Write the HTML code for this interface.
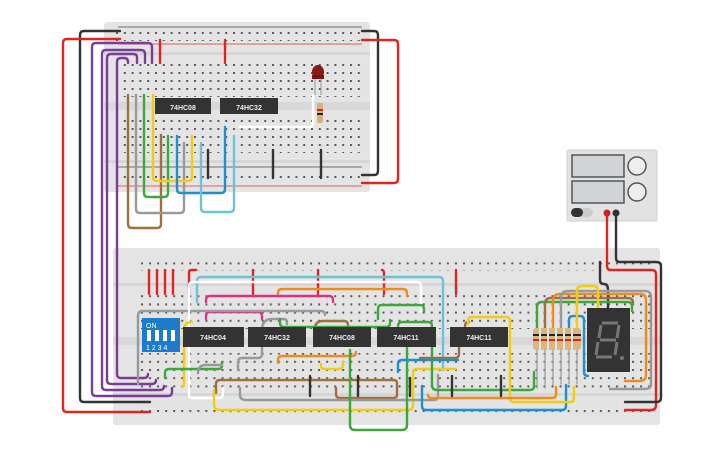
<!DOCTYPE html>
<html><head><meta charset="utf-8"><style>
html,body{margin:0;padding:0;background:#fff;width:725px;height:453px;overflow:hidden}
svg{display:block}
text{font-family:"Liberation Sans",sans-serif}
</style></head><body>
<svg width="725" height="453" viewBox="0 0 725 453" xmlns="http://www.w3.org/2000/svg">
<defs>
<pattern id="h1" x="116" y="0" width="7.8" height="8" patternUnits="userSpaceOnUse"><rect x="0" y="0" width="2" height="2" fill="#5a5a5a"/></pattern>
<pattern id="h2" x="141" y="0" width="8.05" height="8.2" patternUnits="userSpaceOnUse"><rect x="0" y="0" width="2" height="2" fill="#5a5a5a"/></pattern>
</defs>
<!-- top breadboard -->
<rect x="104" y="22" width="266" height="170" rx="3" fill="#e4e4e4"/>
<rect x="104" y="52" width="266" height="3" fill="#d6d6d6"/>
<rect x="104" y="102" width="266" height="8" fill="#d8d8d8"/>
<rect x="104" y="160" width="266" height="3" fill="#d6d6d6"/>
<line x1="118" y1="27" x2="362" y2="27" stroke="#444" stroke-width="0.8"/>
<line x1="118" y1="44" x2="362" y2="44" stroke="#d33" stroke-width="0.8"/>
<line x1="118" y1="167" x2="362" y2="167" stroke="#444" stroke-width="0.8"/>
<line x1="118" y1="186" x2="362" y2="186" stroke="#d33" stroke-width="0.8"/>
<g fill="url(#h1)">
<rect x="116" y="30" width="246" height="11" transform="translate(0,0)"/>
<rect x="116" y="62" width="246" height="35"/>
<rect x="116" y="118" width="246" height="35"/>
<rect x="116" y="171" width="246" height="11"/>
</g>
<!-- bottom breadboard -->
<rect x="113" y="248" width="547" height="177" rx="3" fill="#e4e4e4"/>
<rect x="113" y="283" width="547" height="3" fill="#d6d6d6"/>
<rect x="113" y="337" width="547" height="8" fill="#d8d8d8"/>
<rect x="113" y="393" width="547" height="3" fill="#d6d6d6"/>
<g fill="url(#h2)">
<rect x="141" y="260" width="512" height="11"/>
<rect x="141" y="293" width="512" height="36"/>
<rect x="141" y="353" width="512" height="36"/>
<rect x="141" y="404" width="512" height="11"/>
</g>
<!-- power supply -->
<rect x="567" y="150" width="90" height="71" rx="2" fill="#e2e2e2" stroke="#cfcfcf"/>
<rect x="572" y="155" width="52" height="22" fill="#d0d4d6" stroke="#555" stroke-width="1.5"/>
<rect x="572" y="181" width="52" height="22" fill="#d0d4d6" stroke="#555" stroke-width="1.5"/>
<circle cx="637" cy="166" r="9" fill="#eee" stroke="#555" stroke-width="1.5"/>
<circle cx="637" cy="192" r="9" fill="#eee" stroke="#555" stroke-width="1.5"/>
<rect x="571" y="208" width="22" height="9" rx="4.5" fill="#ccc"/><rect x="571" y="208" width="12" height="9" rx="4.5" fill="#333"/>
<circle cx="607" cy="213" r="3.5" fill="#c22"/><circle cx="616" cy="213" r="3.5" fill="#333"/>
<g fill="none" stroke-linecap="round" stroke-linejoin="round" stroke-width="2.4">
<!-- long left wires -->
<path d="M120,31 H84 Q80,31 80,35 V398 Q80,402 84,402 H150" stroke="#333"/>
<path d="M120,39 H67 Q63,39 63,43 V408 Q63,412 67,412 H150" stroke="#e02424"/>
<path d="M152,63 V47 Q152,43 148,43 H96 Q92,43 92,47 V392 Q92,396 96,396 H168 Q172,396 172,392 V388" stroke="#7a3c99"/>
<path d="M145,63 V54 Q145,50 141,50 H106 Q102,50 102,54 V386 Q102,390 106,390 H160 Q164,390 164,386" stroke="#7a3c99"/>
<path d="M137,63 V57 Q137,54 133,54 H111 Q107,54 107,58 V380 Q107,384 111,384 H152 Q156,384 156,380" stroke="#7a3c99"/>
<path d="M128,63 V62 Q128,58 124,58 H121 Q117,58 117,62 V374 Q117,378 121,378 H144 Q148,378 148,374" stroke="#7a3c99"/>
<!-- top board wires -->
<path d="M362,31 H374 Q378,31 378,35 V171 Q378,175 374,175 H362" stroke="#333"/>
<path d="M362,40 H394 Q398,40 398,44 V179 Q398,183 394,183 H362" stroke="#e02424"/>
<path d="M160,40 V63 M225,40 V63" stroke="#e02424"/>
<path d="M208,150 V178 M273,150 V178 M321,150 V178" stroke="#333"/>
<path d="M128,95 V224 Q128,228 132,228 H157 Q161,228 161,224 V135" stroke="#a0703c"/>
<path d="M136,95 V209 Q136,213 140,213 H180 Q184,213 184,209 V143" stroke="#999"/>
<path d="M144,95 V193 Q144,197 148,197 H164 Q168,197 168,193 V136" stroke="#3aa83a"/>
<path d="M153,95 V177 Q153,181 157,181 H188 Q192,181 192,177 V136" stroke="#f2cc10"/>
<path d="M177,136 V189 Q177,193 181,193 H221 Q225,193 225,189 V127" stroke="#1e8fcf"/>
<path d="M201,143 V208 Q201,212 205,212 H230 Q234,212 234,208 V136" stroke="#6cc3d8"/>
<path d="M313,95 V123 Q313,127 309,127 H240" stroke="#fff"/>
<!-- supply to bottom -->
<path d="M607,213 V266 Q607,270 611,270 H652 Q656,270 656,274 V405 Q656,410 651,410 H625" stroke="#e02424"/>
<path d="M616,213 V258 Q616,262 620,262 H656 Q661,262 661,266 V398 Q661,402 656,402 H625" stroke="#333"/>
<path d="M600,262 V280 Q600,284 604,284 Q608,284 608,290 V312" stroke="#333"/>
<!-- bottom board wires -->
<path d="M149,270 V294 M157,270 V294 M165,270 V294 M173,270 V294" stroke="#e02424"/>
<path d="M189,294 V272 Q189,270 192,270 H196 M253,270 V294 M318,270 V294 M382,270 Q384,270 384,274 V294 M456,270 V294" stroke="#e02424"/>
<path d="M197,302 V281 Q197,277 201,277 H439 Q443,277 443,281 V370" stroke="#6cc3d8"/>
<path d="M278,294 V293 Q278,289 282,289 H403 Q407,289 407,293 V296" stroke="#f08a1a"/>
<path d="M206,302 V300 Q206,296 210,296 H329 Q333,296 333,300 V302" stroke="#e0308a"/>
<path d="M206,319 V316 Q206,312 210,312 H258 Q262,312 262,316 V319" stroke="#e0308a"/>
<path d="M138,384 V316 Q138,311 143,311 H321 Q325,311 325,315" stroke="#999"/>
<path d="M189,311 V286 Q189,282 193,282 H417 Q421,282 421,286 V311 M189,311 V395 Q189,398 193,398 H219 Q223,398 223,394 V388" stroke="#fff"/>
<path d="M182,387 Q184,387 184,382 V330 Q184,322 192,322" stroke="#f2cc10"/>
<path d="M238,370 V362 Q238,358 242,358 H258 Q262,358 262,354 V330 Q262,319 272,319 H284 Q287,319 287,324" stroke="#999"/>
<path d="M165,378 V373 Q165,369 169,369 H218 Q222,369 222,365 V362" stroke="#3aa83a"/>
<path d="M198,373 Q198,365 206,365 H222" stroke="#999"/>
<path d="M278,363 V360 Q278,356 282,356 H352 Q356,356 356,352" stroke="#f08a1a"/>
<path d="M315,346 V329 Q315,321 323,321 H344 Q348,321 348,325" stroke="#a0703c"/>
<path d="M280,319 V323 Q280,327 284,327 H386 Q390,327 390,323 V320" stroke="#3aa83a"/>
<path d="M321,364 V366 Q321,369 325,369 H339 Q343,369 343,365 V362" stroke="#f2cc10"/>
<path d="M216,393 V384 Q216,380 220,380 H393 Q397,380 397,383 V395 Q397,398 393,398 H340 Q336,398 336,394 V388" stroke="#a0703c"/>
<path d="M214,390 V404 Q214,410 220,410 H408 Q413,410 413,405 V373 Q413,369 417,369 H456" stroke="#f2cc10"/>
<path d="M240,388 V395 Q240,400 246,400 H434 Q438,400 438,396 V375" stroke="#999"/>
<path d="M350,350 V425 Q350,430 355,430 H402 Q407,430 407,425 V340 Q407,336 403,336 H380" stroke="#3aa83a"/>
<path d="M378,319 V309 Q378,305 382,305 H420 Q424,305 424,309 V311" stroke="#3aa83a"/>
<path d="M398,326 Q398,322 402,322 H428 Q432,322 432,326 V385 Q432,390 437,390 H530 Q534,390 534,386 V372" stroke="#3aa83a"/>
<path d="M420,358 H455 Q459,358 459,354 V344 Q459,341 463,341 Q465,341 465,336 V326 Q465,322 469,322" stroke="#a0703c"/>
<path d="M398,372 V364 Q398,360 402,360 H458" stroke="#1e8fcf"/>
<path d="M422,386 V406 Q422,410 426,410 H562 Q566,410 566,406 V385" stroke="#1e8fcf"/>
<path d="M468,324 V321 Q468,317 472,317 H506 Q510,317 510,321 V398 Q510,402 514,402 H570 Q574,402 574,398 V387" stroke="#f2cc10"/>
<path d="M428,395 Q428,398 432,398 H552 Q556,398 556,394 V387" stroke="#f08a1a"/>
<path d="M310,376 V396 M358,376 V396 M452,376 V396 M501,376 V396 M410,378 V396" stroke="#333"/>
<!-- resistor and display wires -->
<path d="M537,328 V307 Q537,302 542,302 H628 Q632,302 632,307 V311" stroke="#3aa83a"/>
<path d="M545,328 V304 Q545,298 551,298 H628 Q633,298 633,303" stroke="#a0703c"/>
<path d="M553,328 V301 Q553,294 560,294 H640 Q646,294 646,300 V375 Q646,381 640,381 H625" stroke="#f08a1a"/>
<path d="M561,328 V298 Q561,291 568,291 H645 Q651,291 651,297 V384 Q651,389 645,389 H610" stroke="#999"/>
<path d="M569,328 V320 Q569,316 573,316 H580 Q584,316 584,320 V372 Q584,376 588,376" stroke="#1e8fcf"/>
<path d="M577,328 V291 Q577,286 582,286 H593 Q598,286 598,291 V310" stroke="#f2cc10"/>
<path d="M537,350 V388 M545,350 V388 M553,350 V385 M561,350 V384 M569,350 V384 M577,350 V384" stroke="#999" stroke-width="1.2"/>
</g>
<!-- top board chips -->
<rect x="155" y="98" width="56" height="16" fill="#333"/><text x="183" y="110" font-size="7" fill="#eee" text-anchor="middle" font-weight="bold">74HC08</text>
<rect x="220" y="98" width="58" height="16" fill="#333"/><text x="249" y="110" font-size="7" fill="#eee" text-anchor="middle" font-weight="bold">74HC32</text>
<!-- LED + resistor top -->
<ellipse cx="318" cy="72" rx="6" ry="7" fill="#8b1a1a"/><rect x="312" y="75" width="12" height="4" fill="#7a1515"/>
<path d="M315,79 V95 M321,79 V95" stroke="#999" stroke-width="1"/>
<rect x="317" y="103" width="6" height="20" rx="2" fill="#d6b27a"/>
<rect x="317" y="109" width="6" height="2" fill="#d22"/><rect x="317" y="113" width="6" height="2" fill="#222"/>
<!-- bottom board chips -->
<rect x="142" y="318" width="38" height="34" fill="#1e7bc8"/>
<text x="146" y="328" font-size="7" fill="#fff">ON</text>
<g fill="#fff"><rect x="147" y="330" width="4" height="11"/><rect x="155" y="330" width="4" height="11"/><rect x="163" y="330" width="4" height="11"/><rect x="171" y="330" width="4" height="11"/></g>
<text x="146" y="350" font-size="7" fill="#fff">1 2 3 4</text>
<g font-size="7" fill="#eee" text-anchor="middle" font-weight="bold">
<rect x="183" y="327" width="61" height="20" fill="#333"/><text x="213" y="340">74HC04</text>
<rect x="248" y="327" width="58" height="20" fill="#333"/><text x="277" y="340">74HC32</text>
<rect x="313" y="327" width="58" height="20" fill="#333"/><text x="342" y="340">74HC08</text>
<rect x="377" y="327" width="59" height="20" fill="#333"/><text x="406" y="340">74HC11</text>
<rect x="450" y="327" width="58" height="20" fill="#333"/><text x="479" y="340">74HC11</text>
</g>
<!-- resistors -->
<g>
<rect x="533" y="328" width="48" height="22" fill="#d9b77e" rx="3"/>
<g fill="#222"><rect x="533" y="334" width="48" height="2"/></g>
<g fill="#d22"><rect x="533" y="339" width="48" height="2"/></g>
<g fill="#e4e4e4"><rect x="539" y="328" width="2" height="22"/><rect x="547" y="328" width="2" height="22"/><rect x="555" y="328" width="2" height="22"/><rect x="563" y="328" width="2" height="22"/><rect x="571" y="328" width="2" height="22"/></g>
</g>
<!-- 7 seg -->
<rect x="587" y="308" width="43" height="64" fill="#333"/>
<g fill="none" stroke="#777" stroke-width="3">
<path d="M602,323 H618 M601,325 L599,338 M619,325 L617,338 M600,340 H616 M598,342 L596,355 M617,342 L615,355 M596,357 H612"/>
</g>
<circle cx="622" cy="358" r="2" fill="#777"/>
</svg>
</body></html>
